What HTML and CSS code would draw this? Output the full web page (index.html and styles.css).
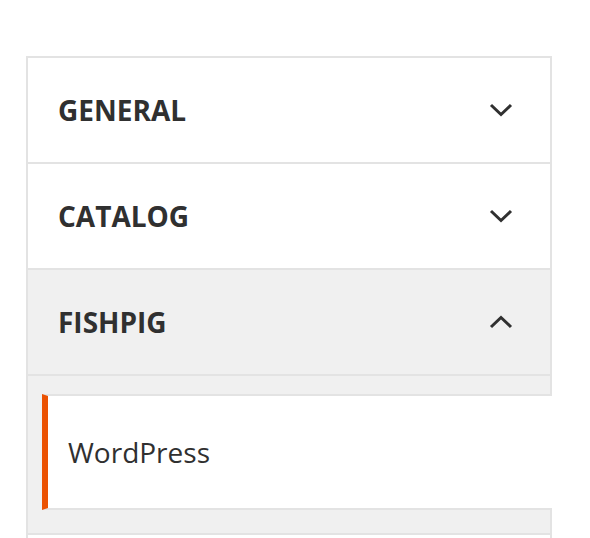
FILE: index.html
```html
<!DOCTYPE html>
<html lang="en">
<head>
    <meta charset="UTF-8">
    <meta name="viewport" content="width=device-width, initial-scale=1.0">
    <title>Configuration</title>
    <link rel="stylesheet" href="styles.css">
</head>
<body>
    <div class="config-nav">
        <div class="config-tab">
            <div class="tab-title">
                <span>General</span>
                <svg class="chevron" viewBox="0 0 24 14" width="24" height="14">
                    <path d="M2 2 L12 11.5 L22 2" />
                </svg>
            </div>
        </div>

        <div class="config-tab">
            <div class="tab-title">
                <span>Catalog</span>
                <svg class="chevron" viewBox="0 0 24 14" width="24" height="14">
                    <path d="M2 2 L12 11.5 L22 2" />
                </svg>
            </div>
        </div>

        <div class="config-tab open">
            <div class="tab-title">
                <span>FishPig</span>
                <svg class="chevron" viewBox="0 0 24 14" width="24" height="14">
                    <path d="M2 12 L12 2.5 L22 12" />
                </svg>
            </div>
            <ul class="tab-items">
                <li class="tab-item active"><a href="#">WordPress</a></li>
            </ul>
        </div>

        <!-- next section, starts just below the fold -->
        <div class="config-tab tab-rest"></div>
    </div>
</body>
</html>
```

FILE: styles.css
```css
body {
    font-family: "Open Sans", Arial, sans-serif;
    color: #303030;
    background: #fff;
    margin: 0;
    padding: 56px 38px 0 26px;
}
.config-nav {
    width: 522px;
    border: 2px solid #e3e3e3;
    border-bottom: none;
}
.config-tab {
    border-bottom: 2px solid #e3e3e3;
}
.tab-title {
    display: flex;
    align-items: center;
    justify-content: space-between;
    height: 104px;
    padding: 0 37px 0 30px;
    font-size: 28px;
    line-height: 1;
    font-weight: 700;
    text-transform: uppercase;
    cursor: pointer;
}
.config-tab.open {
    background: #f0f0f0;
}
.tab-rest {
    height: 104px;
}
.chevron {
    display: block;
}
.chevron path {
    fill: none;
    stroke: #303030;
    stroke-width: 3;
}
.tab-items {
    list-style: none;
    margin: 0;
    padding: 18px 0 23px 0;
    background: #f0f0f0;
    border-top: 2px solid #e3e3e3;
}
.tab-item {
    margin: 0 -2px 0 14px;
    background: #fff;
    border-top: 2px solid #e3e3e3;
    border-bottom: 2px solid #e3e3e3;
    border-left: 6px solid #eb5202;
}
.tab-item a {
    display: flex;
    align-items: center;
    height: 112px;
    padding-left: 20px;
    font-size: 28px;
    line-height: 1;
    color: #303030;
    text-decoration: none;
}
```
